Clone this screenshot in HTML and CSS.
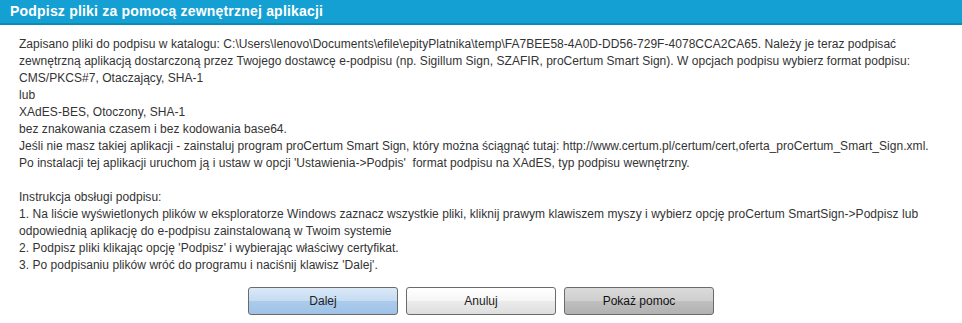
FILE: index.html
```html
<!DOCTYPE html>
<html lang="pl">
<head>
<meta charset="utf-8">
<title>Podpisz pliki za pomocą zewnętrznej aplikacji</title>
<link rel="stylesheet" href="styles.css">
</head>
<body>
<div class="dialog">
  <div class="header">Podpisz pliki za pomocą zewnętrznej aplikacji</div>
  <div class="content">
    <p class="text">Zapisano pliki do podpisu w katalogu: C:\Users\lenovo\Documents\efile\epityPlatnika\temp\FA7BEE58-4A0D-DD56-729F-4078CCA2CA65. Należy je teraz podpisać zewnętrzną aplikacją dostarczoną przez Twojego dostawcę e-podpisu (np. Sigillum Sign, SZAFIR, proCertum Smart Sign). W opcjach podpisu wybierz format podpisu:<br>CMS/PKCS#7, Otaczający, SHA-1<br>lub<br>XAdES-BES, Otoczony, SHA-1<br>bez znakowania czasem i bez kodowania base64.<br>Jeśli nie masz takiej aplikacji - zainstaluj program proCertum Smart Sign, który można ściągnąć tutaj: http://www.certum.pl/certum/cert,oferta_proCertum_Smart_Sign.xml.<br>Po instalacji tej aplikacji uruchom ją i ustaw w opcji 'Ustawienia-&gt;Podpis'&nbsp; format podpisu na XAdES, typ podpisu wewnętrzny.<br><br>Instrukcja obsługi podpisu:<br>1. Na liście wyświetlonych plików w eksploratorze Windows zaznacz wszystkie pliki, kliknij prawym klawiszem myszy i wybierz opcję proCertum SmartSign-&gt;Podpisz lub odpowiednią aplikację do e-podpisu zainstalowaną w Twoim systemie<br>2. Podpisz pliki klikając opcję 'Podpisz' i wybierając właściwy certyfikat.<br>3. Po podpisaniu plików wróć do programu i naciśnij klawisz 'Dalej'.</p>
  </div>
  <div class="buttons">
    <button class="btn btn-primary" type="button">Dalej</button>
    <button class="btn btn-default" type="button">Anuluj</button>
    <button class="btn btn-gray" type="button">Pokaż pomoc</button>
  </div>
</div>
</body>
</html>
```
FILE: styles.css
```css
html, body {
  margin: 0;
  padding: 0;
  background: #ffffff;
}
body {
  font-family: "Liberation Sans", Arial, sans-serif;
  color: #333333;
}
.dialog {
  width: 962px;
  display: flex;
  flex-direction: column;
}
.header {
  height: 23px;
  line-height: 23px;
  background: #14a0d3;
  border-bottom: 2px solid #0f8ab7;
  color: #ffffff;
  font-weight: bold;
  font-size: 14px;
  letter-spacing: 0.2px;
  padding-left: 10px;
}
.content {
  padding: 11px 19px 0 19px;
}
.text {
  margin: 0;
  font-size: 12px;
  line-height: 17px;
  letter-spacing: 0.04px;
  color: #333333;
}
.buttons {
  display: flex;
  justify-content: center;
  gap: 8px;
  margin-top: 13px;
}
.btn {
  width: 150px;
  height: 28px;
  border: 1px solid #6b6b6b;
  border-radius: 3px;
  font-family: "Liberation Sans", Arial, sans-serif;
  font-size: 12px;
  color: #222222;
  padding: 0;
}
.btn-primary {
  background: linear-gradient(to bottom, #dbe9f7 0%, #c5dcf2 48%, #abcbeb 52%, #9fc2e7 100%);
}
.btn-default {
  background: linear-gradient(to bottom, #ffffff 0%, #f6f6f6 48%, #ebebeb 52%, #dedede 100%);
}
.btn-gray {
  background: linear-gradient(to bottom, #dadada 0%, #cfcfcf 48%, #bfbfbf 52%, #b1b1b1 100%);
  color: #111111;
}
```
